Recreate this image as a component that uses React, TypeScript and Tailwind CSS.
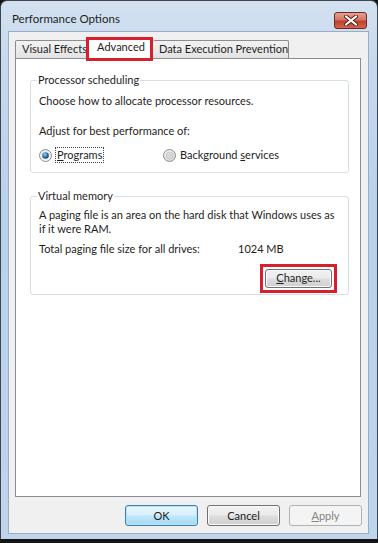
import React from "react";

const font = { fontFamily: 'Lato, "Segoe UI", "Noto Sans", sans-serif' };

function RadioOn() {
  return (
    <svg width="13" height="13" viewBox="0 0 13 13">
      <defs>
        <radialGradient id="rg1" cx="0.4" cy="0.35" r="0.7">
          <stop offset="0" stopColor="#9ed0f0" />
          <stop offset="0.6" stopColor="#2a6ea8" />
          <stop offset="1" stopColor="#0d3f6e" />
        </radialGradient>
        <linearGradient id="rb1" x1="0" y1="0" x2="0" y2="1">
          <stop offset="0" stopColor="#e8e8e8" />
          <stop offset="1" stopColor="#f8f8f8" />
        </linearGradient>
      </defs>
      <circle cx="6.5" cy="6.5" r="6" fill="url(#rb1)" stroke="#8f8f8f" />
      <circle cx="6.5" cy="6.5" r="3.3" fill="url(#rg1)" />
    </svg>
  );
}

function RadioOff() {
  return (
    <svg width="13" height="13" viewBox="0 0 13 13">
      <defs>
        <radialGradient id="rg2" cx="0.4" cy="0.4" r="0.7">
          <stop offset="0" stopColor="#ffffff" />
          <stop offset="1" stopColor="#cfcfcf" />
        </radialGradient>
      </defs>
      <circle cx="6.5" cy="6.5" r="6" fill="url(#rg2)" stroke="#8f8f8f" />
      <circle cx="6.5" cy="6.5" r="3.5" fill="#d8d8d8" stroke="#bdbdbd" strokeWidth="0.6" />
    </svg>
  );
}

function CloseBtn() {
  return (
    <div className="w-[33px] h-[17px] rounded-[3px] border border-[#6e2a20] bg-[linear-gradient(#e6a193_0%,#d47563_45%,#c0402c_55%,#d2654e_100%)] flex items-center justify-center">
      <svg width="14" height="11" viewBox="0 0 14 11">
        <path d="M2 1.5 L12 9.5 M12 1.5 L2 9.5" stroke="#5a2018" strokeWidth="4" strokeLinecap="round" />
        <path d="M2 1.5 L12 9.5 M12 1.5 L2 9.5" stroke="#ffffff" strokeWidth="2.2" strokeLinecap="round" />
      </svg>
    </div>
  );
}

function GroupBox({ label, className, children }: { label: string; className?: string; children: React.ReactNode }) {
  return (
    <div className={"relative border border-[#d5dfe5] rounded-[3px] " + (className ?? "")}>
      <div className="absolute left-[6px] top-[-9px] bg-white px-[1px] leading-[16px] text-[#1e1e1e] whitespace-nowrap">{label}</div>
      {children}
    </div>
  );
}

function Btn({ children, variant }: { children: React.ReactNode; variant?: "default" | "disabled" }) {
  const base = "w-[73px] h-[21px] rounded-[3px] flex items-center justify-center leading-none";
  if (variant === "default")
    return (
      <div className={base + " border border-[#3c7fb1] bg-[linear-gradient(#eaf6fd_0%,#d9f0fc_45%,#bee6fd_55%,#a7d9f5_100%)] shadow-[inset_0_0_0_1px_#b8e2f9] text-[#1e1e1e]"}>
        {children}
      </div>
    );
  if (variant === "disabled")
    return <div className={base + " border border-[#adb2b5] bg-[#f4f4f4] text-[#838383]"}>{children}</div>;
  return (
    <div className={base + " border border-[#707070] bg-[linear-gradient(#f2f2f2_0%,#ebebeb_45%,#dddddd_55%,#cfcfcf_100%)] shadow-[inset_0_0_0_1px_#fbfbfb] text-[#1e1e1e]"}>
      {children}
    </div>
  );
}

export default function App() {
  return (
    <div className="w-[378px] h-[543px] bg-[#151515] text-[11px] text-[#1e1e1e] whitespace-nowrap" style={font}>
      <div className="w-[378px] h-[539px] rounded-t-[7px] border-t border-x border-[#3d4650] bg-[linear-gradient(180deg,#d3e1f0_0%,#c6d9ee_12%,#b9d1ea_40%,#bed5ec_100%)] flex flex-col">
        <div className="h-[30px] flex items-center justify-between pl-[11px] pr-[10px]">
          <div className="text-[11.5px] text-[#1e1e1e] leading-none mt-[6px]">Performance Options</div>
          <div className="mt-[8px]">
            <CloseBtn />
          </div>
        </div>
        <div className="ml-[7px] mr-[8px] mb-[5px] flex-1 bg-[#f0f0f0] border border-[#98aec6] flex flex-col pl-[6px] pr-[7px]">
          <div className="h-[26px] flex items-end mt-0">
            <div className="h-[18px] w-[72px] border border-[#898c95] border-b-0 rounded-t-[2px] bg-[linear-gradient(#f2f2f2,#e3e3e3)] flex items-center pl-[6px] mb-0 text-[#1e1e1e]">
              Visual Effects
            </div>
            <div className="relative h-[21px] w-[66px] border border-[#898c95] border-b-0 rounded-t-[2px] bg-white flex items-center justify-center -mb-[1px] z-10">
              <span className="-mt-[3px] ml-[2px]">Advanced</span>
              <div className="absolute left-[-2px] top-[-2px] w-[67px] h-[24px] border-[3px] border-[#d8202c]" />
            </div>
            <div className="h-[18px] w-[136px] border border-[#898c95] border-b-0 border-l-0 rounded-t-[2px] bg-[linear-gradient(#f2f2f2,#e3e3e3)] flex items-center pl-[6px]">
              Data Execution Prevention
            </div>
          </div>
          <div className="h-[439px] bg-white border border-[#898c95] pt-[21px] pl-[14px] pr-[11px]">
            <GroupBox label="Processor scheduling" className="h-[93px] pl-[8px] pt-[12px]">
              <div className="leading-[16px]">Choose how to allocate processor resources.</div>
              <div className="leading-[16px] mt-[14px]">Adjust for best performance of:</div>
              <div className="flex items-center mt-[8px] h-[16px]">
                <div className="w-[124px] flex items-center">
                  <RadioOn />
                  <span className="ml-[3px] leading-[14px] border border-dotted border-[#444] px-[1px]">
                    <span className="underline">P</span>rograms
                  </span>
                </div>
                <div className="flex items-center">
                  <RadioOff />
                  <span className="ml-[4px]">
                    Background <span className="underline">s</span>ervices
                  </span>
                </div>
              </div>
            </GroupBox>
            <GroupBox label="Virtual memory" className="mt-[23px] h-[99px] pl-[8px] pt-[11px]">
              <div className="leading-[14px]">
                A paging file is an area on the hard disk that Windows uses as
                <br />
                if it were RAM.
              </div>
              <div className="flex mt-[5px] leading-[16px]">
                <span className="w-[199px]">Total paging file size for all drives:</span>
                <span>1024 MB</span>
              </div>
              <div className="flex justify-end mt-[7px] mr-[11px]">
                <div className="border-[3px] border-[#d8202c] p-[2px]">
                  <div className="w-[67px] h-[19px] rounded-[3px] border border-[#707070] bg-[linear-gradient(#f2f2f2_0%,#ebebeb_45%,#dddddd_55%,#cfcfcf_100%)] shadow-[inset_0_0_0_1px_#fbfbfb] flex items-center justify-center">
                    <span>
                      <span className="underline">C</span>hange...
                    </span>
                  </div>
                </div>
              </div>
            </GroupBox>
          </div>
          <div className="flex justify-end gap-[9px] mt-[8px] -mr-[1px]">
            <Btn variant="default">OK</Btn>
            <Btn>Cancel</Btn>
            <Btn variant="disabled">
              <span>
                <span className="underline">A</span>pply
              </span>
            </Btn>
          </div>
        </div>
      </div>
    </div>
  );
}
